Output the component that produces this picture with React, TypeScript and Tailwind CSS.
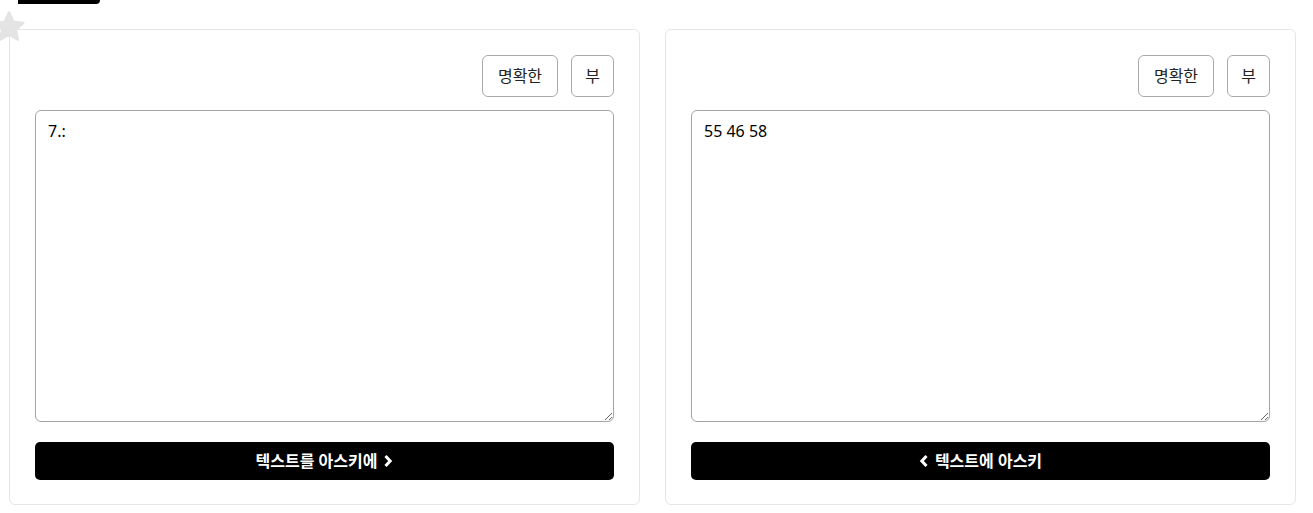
import React, { useState } from 'react';

// 상단에 잘려서 아랫부분만 보이는 제목 조각
const CutTitle: React.FC = () => (
  <div className="pl-[18px]">
    <div className="h-[4px] w-[82px] rounded-br-[4px] bg-black" />
  </div>
);

const Star: React.FC = () => (
  <svg
    className="absolute left-[-9px] top-[9px]"
    width="36"
    height="36"
    viewBox="0 0 24 24"
    fill="#e4e4e4"
  >
    <path
      d="M12 2.2l2.9 6.2 6.7.8-5 4.6 1.4 6.7L12 17.1l-6 3.4 1.4-6.7-5-4.6 6.7-.8z"
      strokeLinejoin="round"
      stroke="#e4e4e4"
      strokeWidth="1.5"
    />
  </svg>
);

const ChevronRight = () => (
  <svg width="10" height="14" viewBox="0 0 10 14" fill="none">
    <path d="M2.5 2L7.2 7l-4.7 5" stroke="white" strokeWidth="3" />
  </svg>
);

const ChevronLeft = () => (
  <svg width="10" height="14" viewBox="0 0 10 14" fill="none">
    <path d="M7.5 2L2.8 7l4.7 5" stroke="white" strokeWidth="3" />
  </svg>
);

interface PanelProps {
  value: string;
  onChange: (v: string) => void;
  action: React.ReactNode;
}

const Panel: React.FC<PanelProps> = ({ value, onChange, action }) => (
  <div className="flex-1 rounded-[6px] border border-[#e6e6e6] bg-white px-[25px] pb-[24px] pt-[25px]">
    <div className="flex justify-end gap-[13px]">
      <button
        onClick={() => onChange('')}
        className="h-[42px] w-[76px] rounded-[6px] border border-[#a9a9a9] bg-white text-[16px] text-[#222]"
      >
        명확한
      </button>
      <button className="h-[42px] w-[43px] rounded-[6px] border border-[#a9a9a9] bg-white text-[16px] text-[#222]">
        부
      </button>
    </div>
    <textarea
      value={value}
      onChange={(e) => onChange(e.target.value)}
      className="mt-[13px] block h-[312px] w-full rounded-[6px] border border-[#a5a5a5] px-[12px] py-[8px] text-[16px] leading-[24px] text-black outline-none"
    />
    <button className="mt-[20px] flex h-[38px] w-full items-center justify-center gap-[6px] rounded-[5px] bg-black text-[16px] font-bold text-white">
      {action}
    </button>
  </div>
);

export default function App() {
  const [text, setText] = useState('7.:');
  const [ascii, setAscii] = useState('55 46 58');

  return (
    <div
      className="relative min-h-[513px] bg-white"
      style={{ fontFamily: '"Noto Sans", "Noto Sans CJK KR", sans-serif' }}
    >
      <CutTitle />
      <Star />
      <div className="flex gap-[25px] pl-[9px] pr-[17px] pt-[25px]">
        <Panel
          value={text}
          onChange={setText}
          action={
            <>
              <span>텍스트를 아스키에</span>
              <ChevronRight />
            </>
          }
        />
        <Panel
          value={ascii}
          onChange={setAscii}
          action={
            <>
              <ChevronLeft />
              <span>텍스트에 아스키</span>
            </>
          }
        />
      </div>
    </div>
  );
}
